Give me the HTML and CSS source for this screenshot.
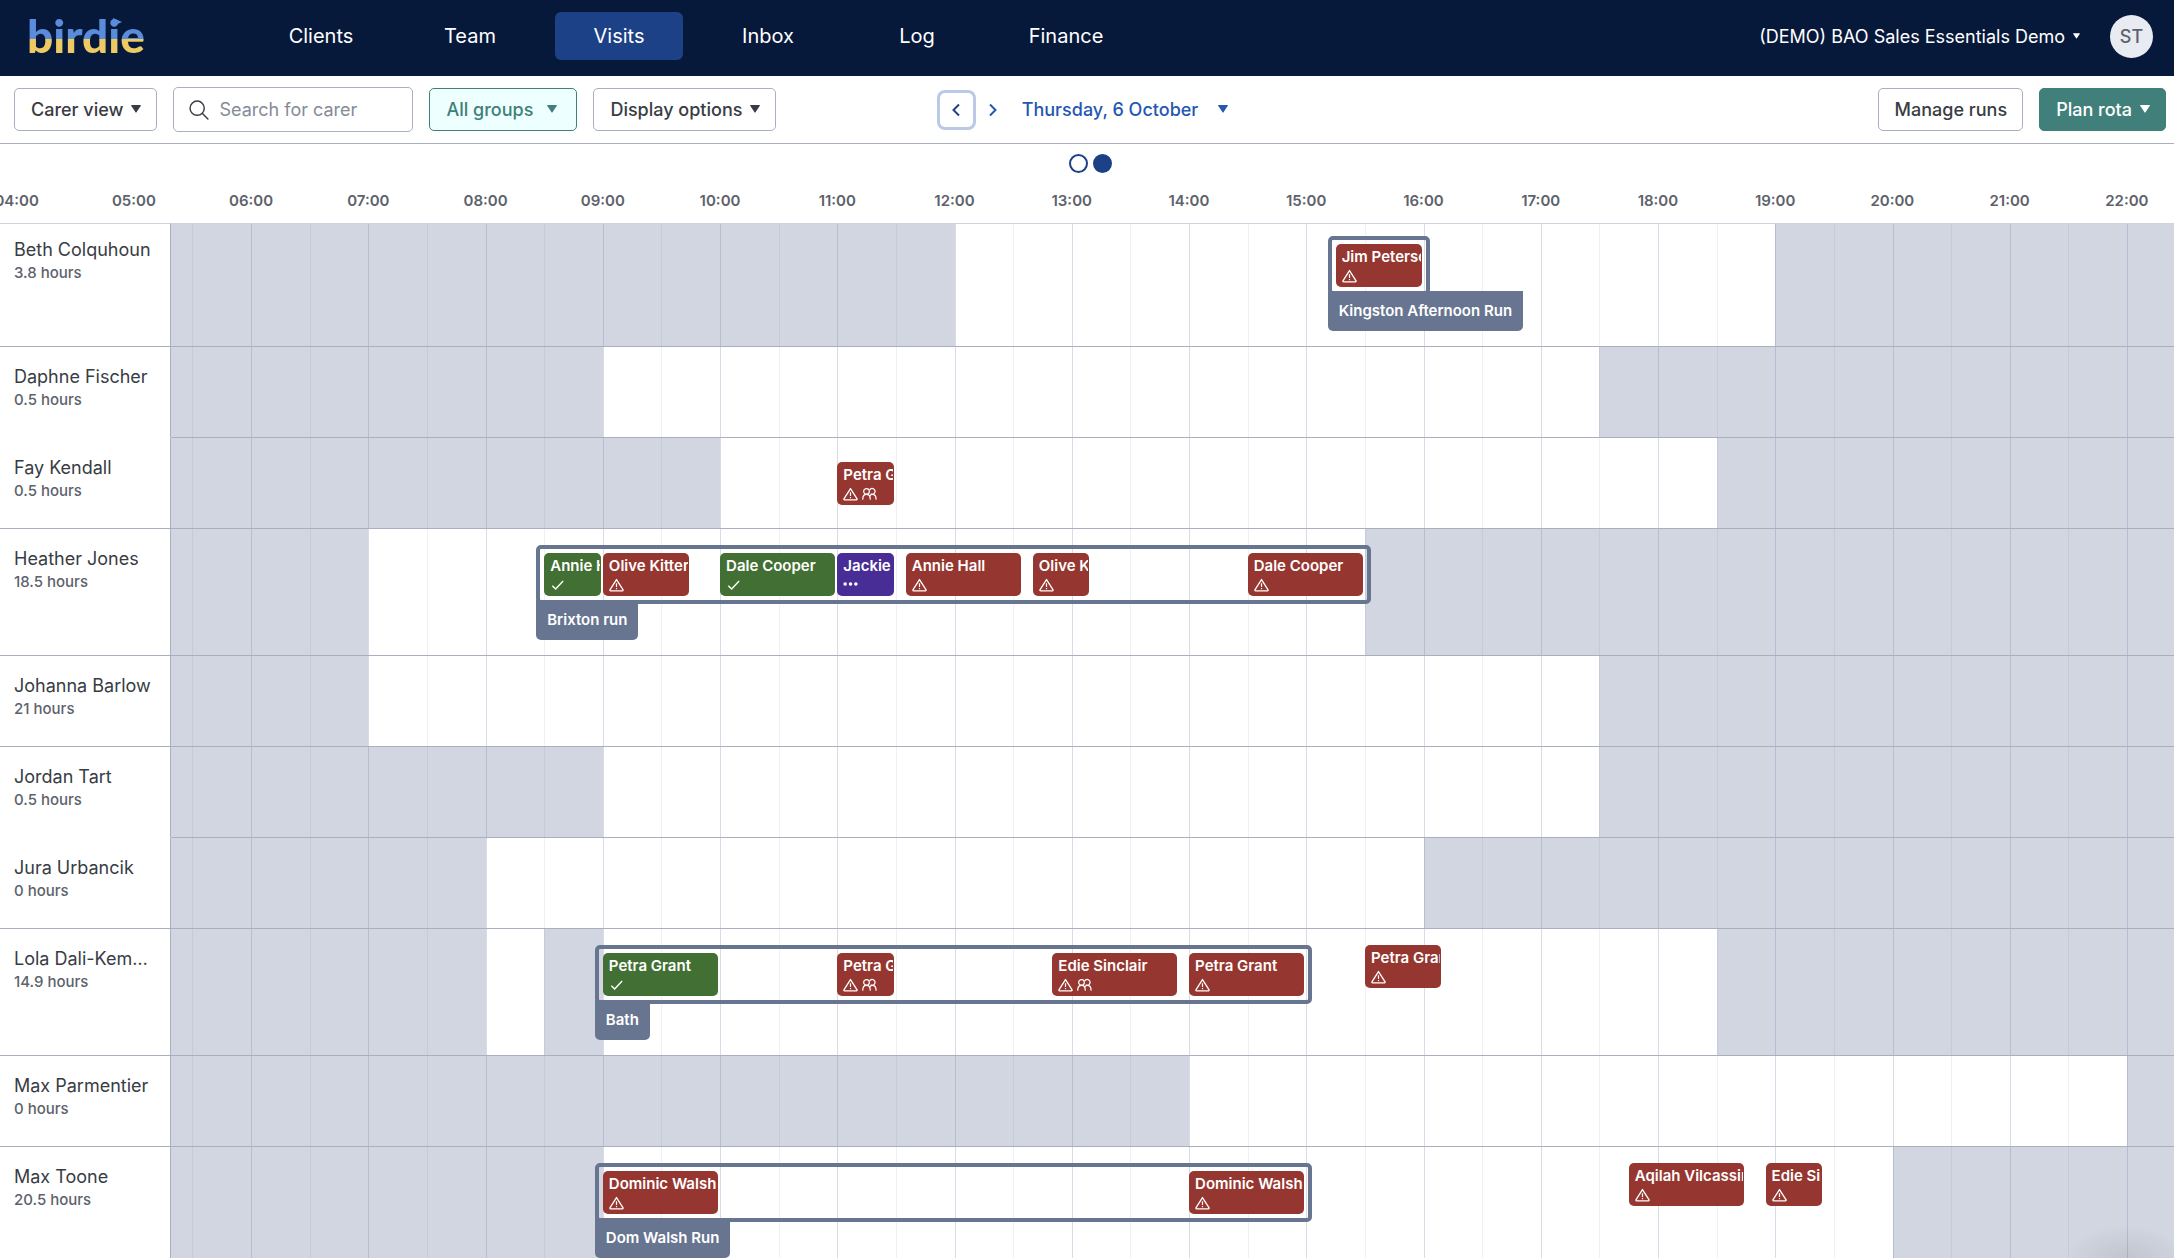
FILE: index.html
```html
<!DOCTYPE html>
<html lang="en">

<head>
  <meta charset="UTF-8">
  <meta name="viewport" content="width=device-width, initial-scale=1.0">
  <title>Visits - birdie</title>
  <link rel="stylesheet" href="styles.css">
</head>

<body>
  <!-- Shared icons -->
  <svg class="sprite" aria-hidden="true">
    <symbol id="caret" viewBox="0 0 10 8"><path d="M.6 0h8.8a.5.5 0 0 1 .4.8L5.5 7.3a.6.6 0 0 1-1 0L.2.8A.5.5 0 0 1 .6 0z" fill="currentColor"/></symbol>
    <symbol id="alert" viewBox="0 0 16 14"><path d="M8 1.2 15 12.2a.7.7 0 0 1-.6 1H1.6a.7.7 0 0 1-.6-1z" fill="none" stroke="currentColor" stroke-width="1.4" stroke-linejoin="round"/><path d="M8 5v4M8 10.2v1.3" stroke="currentColor" stroke-width="1.3"/></symbol>
    <symbol id="pair" viewBox="0 0 16 14"><g fill="none" stroke="currentColor" stroke-width="1.3" stroke-linecap="round"><circle cx="4.8" cy="4.2" r="3"/><path d="M.8 12.6c0-3 1.6-5.2 4-5.2s4 2.2 4 5.2"/><path d="M8.6 2.2a3 3 0 1 1 1.2 4.8M8.3 8.9c.7-1 1.5-1.6 2.7-1.6 2.4 0 4 2.2 4 5.2"/></g></symbol>
    <symbol id="tick" viewBox="0 0 16 14"><path d="M2.5 7.8 6 11.3 14 2.8" fill="none" stroke="currentColor" stroke-width="1.5"/></symbol>
    <symbol id="more" viewBox="0 0 16 14"><g fill="currentColor"><circle cx="2.3" cy="6" r="1.9"/><circle cx="8" cy="6" r="1.9"/><circle cx="13.7" cy="6" r="1.9"/></g></symbol>
  </svg>

  <!-- Main navigation -->
  <header class="topbar">
    <a class="logo" href="#">birdie</a>
    <nav class="tabs">
      <a href="#">Clients</a>
      <a href="#">Team</a>
      <a href="#" class="active" aria-current="page">Visits</a>
      <a href="#">Inbox</a>
      <a href="#">Log</a>
      <a href="#">Finance</a>
    </nav>
    <button type="button" class="agency">(DEMO) BAO Sales Essentials Demo <svg class="caret caret-small"><use href="#caret"/></svg></button>
    <button type="button" class="avatar" aria-label="Account ST">ST</button>
  </header>

  <!-- Filters and date -->
  <div class="toolbar">
    <div class="tools">
      <button type="button" class="btn">Carer view <svg class="caret"><use href="#caret"/></svg></button>
      <label class="search">
        <svg viewBox="0 0 22 22" aria-hidden="true"><g fill="none" stroke="currentColor" stroke-width="1.6" stroke-linecap="round"><circle cx="9" cy="9" r="7.8"/><path d="m14.8 14.8 6 6"/></g></svg>
        <input type="search" placeholder="Search for carer" aria-label="Search for carer">
      </label>
      <button type="button" class="btn btn-filter">All groups <svg class="caret"><use href="#caret"/></svg></button>
      <button type="button" class="btn">Display options <svg class="caret"><use href="#caret"/></svg></button>
    </div>
    <div class="date-nav">
      <button type="button" class="arrow focused" aria-label="Previous day"><svg viewBox="0 0 10 14"><path d="M8 1.5 2.5 7 8 12.5" fill="none" stroke="currentColor" stroke-width="2"/></svg></button>
      <button type="button" class="arrow" aria-label="Next day"><svg viewBox="0 0 10 14"><path d="M2 1.5 7.5 7 2 12.5" fill="none" stroke="currentColor" stroke-width="2"/></svg></button>
      <button type="button" class="date">Thursday, 6 October <svg class="caret"><use href="#caret"/></svg></button>
    </div>
    <div class="tools tools-right">
      <button type="button" class="btn">Manage runs</button>
      <button type="button" class="btn btn-primary">Plan rota <svg class="caret"><use href="#caret"/></svg></button>
    </div>
  </div>

  <!-- Time axis -->
  <div class="pager">
    <input type="radio" name="page" aria-label="Page 1">
    <input type="radio" name="page" aria-label="Page 2" checked>
  </div>
  <div class="hours">
    <span>04:00</span><span>05:00</span><span>06:00</span><span>07:00</span><span>08:00</span><span>09:00</span><span>10:00</span><span>11:00</span><span>12:00</span><span>13:00</span><span>14:00</span><span>15:00</span><span>16:00</span><span>17:00</span><span>18:00</span><span>19:00</span><span>20:00</span><span>21:00</span><span>22:00</span>
  </div>

  <!-- Rota. --from and --to are minutes since midnight -->
  <main class="rota">
    <section class="row row-first">
      <div class="carer"><h2>Beth Colquhoun</h2><p>3.8 hours</p></div>
      <div class="lane">
        <div class="off" style="--from: 319; --to: 720"></div>
        <div class="off" style="--from: 1140; --to: 1344"></div>
        <div class="run" style="--from: 915; --to: 960"></div>
        <div class="run-name" style="--from: 915">Kingston Afternoon Run</div>
        <div class="visit in-run late" style="--from: 915; --to: 960"><span>Jim Peterson</span><svg><use href="#alert"/></svg></div>
      </div>
    </section>

    <section class="row">
      <div class="carer"><h2>Daphne Fischer</h2><p>0.5 hours</p></div>
      <div class="lane">
        <div class="off" style="--from: 319; --to: 540"></div>
        <div class="off" style="--from: 1050; --to: 1344"></div>
      </div>
    </section>

    <section class="row row-joined">
      <div class="carer"><h2>Fay Kendall</h2><p>0.5 hours</p></div>
      <div class="lane">
        <div class="off" style="--from: 319; --to: 600"></div>
        <div class="off" style="--from: 1110; --to: 1344"></div>
        <div class="visit alone late" style="--from: 660; --to: 690"><span>Petra Grant</span><svg><use href="#alert"/></svg><svg><use href="#pair"/></svg></div>
      </div>
    </section>

    <section class="row">
      <div class="carer"><h2>Heather Jones</h2><p>18.5 hours</p></div>
      <div class="lane">
        <div class="off" style="--from: 319; --to: 420"></div>
        <div class="off" style="--from: 930; --to: 1344"></div>
        <div class="run" style="--from: 510; --to: 930"></div>
        <div class="run-name" style="--from: 510">Brixton run</div>
        <div class="visit in-run done" style="--from: 510; --to: 540"><span>Annie Hall</span><svg><use href="#tick"/></svg></div>
        <div class="visit in-run late" style="--from: 540; --to: 585"><span>Olive Kitteridge</span><svg><use href="#alert"/></svg></div>
        <div class="visit in-run done" style="--from: 600; --to: 660"><span>Dale Cooper</span><svg><use href="#tick"/></svg></div>
        <div class="visit in-run active" style="--from: 660; --to: 690"><span>Jackie</span><svg><use href="#more"/></svg></div>
        <div class="visit in-run late" style="--from: 695; --to: 755"><span>Annie Hall</span><svg><use href="#alert"/></svg></div>
        <div class="visit in-run late" style="--from: 760; --to: 790"><span>Olive Kitteridge</span><svg><use href="#alert"/></svg></div>
        <div class="visit in-run late" style="--from: 870; --to: 930"><span>Dale Cooper</span><svg><use href="#alert"/></svg></div>
      </div>
    </section>

    <section class="row">
      <div class="carer"><h2>Johanna Barlow</h2><p>21 hours</p></div>
      <div class="lane">
        <div class="off" style="--from: 319; --to: 420"></div>
        <div class="off" style="--from: 1050; --to: 1344"></div>
      </div>
    </section>

    <section class="row">
      <div class="carer"><h2>Jordan Tart</h2><p>0.5 hours</p></div>
      <div class="lane">
        <div class="off" style="--from: 319; --to: 540"></div>
        <div class="off" style="--from: 1050; --to: 1344"></div>
      </div>
    </section>

    <section class="row row-joined">
      <div class="carer"><h2>Jura Urbancik</h2><p>0 hours</p></div>
      <div class="lane">
        <div class="off" style="--from: 319; --to: 480"></div>
        <div class="off" style="--from: 960; --to: 1344"></div>
      </div>
    </section>

    <section class="row">
      <div class="carer"><h2>Lola Dali-Kem…</h2><p>14.9 hours</p></div>
      <div class="lane">
        <div class="off" style="--from: 319; --to: 480"></div>
        <div class="off" style="--from: 510; --to: 540"></div>
        <div class="off" style="--from: 1110; --to: 1344"></div>
        <div class="run" style="--from: 540; --to: 900"></div>
        <div class="run-name" style="--from: 540">Bath</div>
        <div class="visit in-run done" style="--from: 540; --to: 600"><span>Petra Grant</span><svg><use href="#tick"/></svg></div>
        <div class="visit in-run late" style="--from: 660; --to: 690"><span>Petra Grant</span><svg><use href="#alert"/></svg><svg><use href="#pair"/></svg></div>
        <div class="visit in-run late" style="--from: 770; --to: 835"><span>Edie Sinclair</span><svg><use href="#alert"/></svg><svg><use href="#pair"/></svg></div>
        <div class="visit in-run late" style="--from: 840; --to: 900"><span>Petra Grant</span><svg><use href="#alert"/></svg></div>
        <div class="visit late" style="--from: 930; --to: 970"><span>Petra Grant</span><svg><use href="#alert"/></svg></div>
      </div>
    </section>

    <section class="row">
      <div class="carer"><h2>Max Parmentier</h2><p>0 hours</p></div>
      <div class="lane">
        <div class="off" style="--from: 319; --to: 840"></div>
        <div class="off" style="--from: 1320; --to: 1344"></div>
      </div>
    </section>

    <section class="row">
      <div class="carer"><h2>Max Toone</h2><p>20.5 hours</p></div>
      <div class="lane">
        <div class="off" style="--from: 319; --to: 540"></div>
        <div class="off" style="--from: 1200; --to: 1344"></div>
        <div class="run" style="--from: 540; --to: 900"></div>
        <div class="run-name" style="--from: 540">Dom Walsh Run</div>
        <div class="visit in-run late" style="--from: 540; --to: 600"><span>Dominic Walsh</span><svg><use href="#alert"/></svg></div>
        <div class="visit in-run late" style="--from: 840; --to: 900"><span>Dominic Walsh</span><svg><use href="#alert"/></svg></div>
        <div class="visit late" style="--from: 1065; --to: 1125"><span>Aqilah Vilcassim</span><svg><use href="#alert"/></svg></div>
        <div class="visit late" style="--from: 1135; --to: 1165"><span>Edie Sinclair</span><svg><use href="#alert"/></svg></div>
      </div>
    </section>
  </main>
  <div class="help-shade"></div>
</body>

</html>
```
FILE: styles.css
```css
/* General */
:root {
  --side: 171px;
  /* the lanes show 1025 minutes, 05:19 to 22:24 */
  --minute: calc((100vw - var(--side)) / 1025);
  --navy: #07193b;
  --blue: #1c4186;
  --slate: #677590;
  --line: #a9afbf;
}

* {
  box-sizing: border-box;
}

body {
  margin: 0;
  height: 100vh;
  display: flex;
  flex-direction: column;
  overflow: hidden;
  background: #fff;
  color: #383c43;
  font-family: Inter, "Liberation Sans", sans-serif;
  font-size: 18px;
}

button,
input {
  font: inherit;
  color: inherit;
}

button {
  background: none;
  border: none;
  padding: 0;
  cursor: pointer;
  white-space: nowrap;
}

.sprite {
  display: none;
}

.caret {
  width: 10px;
  height: 8px;
  flex: none;
  margin-bottom: 1px;
}

.caret-small {
  width: 7px;
  height: 6px;
}

/* Top bar */
.topbar {
  flex: none;
  display: flex;
  align-items: center;
  height: 76px;
  padding: 0 21px 4px 27px;
  background: var(--navy);
  color: #fff;
}

.logo {
  position: relative;
  width: 230px;
  font-family: Lato, sans-serif;
  font-size: 46px;
  font-weight: 900;
  line-height: 48px;
  text-decoration: none;
  color: transparent;
  background: linear-gradient(#5b8cdc 27px, #edca62 27px);
  -webkit-background-clip: text;
  background-clip: text;
}

/* beak on the second i */
.logo::after {
  content: "";
  position: absolute;
  left: 86px;
  top: 6px;
  width: 9px;
  height: 8px;
  background: #5b8cdc;
  clip-path: polygon(0 0, 100% 50%, 0 100%);
}

.tabs {
  display: flex;
  gap: 21px;
  margin-right: auto;
}

.tabs a {
  width: 128px;
  line-height: 48px;
  border-radius: 6px;
  text-align: center;
  text-decoration: none;
  font-size: 20px;
  color: #fff;
}

.tabs .active {
  background: var(--blue);
}

.agency {
  display: flex;
  align-items: center;
  gap: 8px;
}

.avatar {
  width: 43px;
  height: 43px;
  margin-left: 30px;
  border-radius: 50%;
  background: #e8ebf2;
  color: #5d626b;
  font-weight: 500;
}

/* Toolbar */
.toolbar {
  flex: none;
  display: grid;
  grid-template-columns: 1fr auto 1fr;
  align-items: center;
  height: 68px;
  padding: 0 8px 0 14px;
  border-bottom: 1px solid var(--line);
}

.tools {
  display: flex;
  align-items: center;
  gap: 16px;
}

.tools-right {
  justify-content: flex-end;
}

.btn {
  display: flex;
  align-items: center;
  gap: 8px;
  height: 43px;
  padding: 0 15px 0 16px;
  border: 1px solid var(--line);
  border-radius: 5px;
  font-weight: 500;
}

.btn-filter {
  gap: 14px;
  padding-right: 19px;
  background: #edfffe;
  border-color: #41807a;
  color: #41807a;
}

.btn-primary {
  background: #41807a;
  border-color: #41807a;
  color: #fff;
}

.search {
  display: flex;
  align-items: center;
  gap: 10px;
  width: 240px;
  height: 45px;
  padding: 0 15px;
  border: 1px solid var(--line);
  border-radius: 5px;
}

.search svg {
  width: 20px;
  height: 20px;
  flex: none;
}

.search input {
  width: 100%;
  min-width: 0;
  padding: 0;
  border: none;
  outline: none;
  background: none;
}

.search input::placeholder {
  color: #858b98;
  opacity: 1;
}

.date-nav {
  display: flex;
  align-items: center;
  gap: 4px;
  color: #2457b3;
}

.arrow {
  display: flex;
  align-items: center;
  justify-content: center;
  width: 33px;
  height: 34px;
  border-radius: 5px;
}

.arrow svg {
  width: 10px;
  height: 14px;
}

.focused {
  color: var(--blue);
  box-shadow: 0 0 0 3px #b9c9e6;
}

.date {
  display: flex;
  align-items: center;
  gap: 20px;
  padding: 0 12px 0 8px;
  font-weight: 500;
}

/* Time axis */
.pager {
  flex: none;
  display: flex;
  justify-content: center;
  gap: 5px;
  padding: 10px 0 0 6px;
}

.pager input {
  appearance: none;
  width: 19px;
  height: 19px;
  margin: 0;
  border: 2px solid var(--blue);
  border-radius: 50%;
}

.pager input:checked {
  background: var(--blue);
}

.hours {
  flex: none;
  display: flex;
  margin-left: calc(var(--side) - 109 * var(--minute));
  padding: 18px 0 12px;
}

.hours span {
  flex: none;
  width: calc(60 * var(--minute));
  text-align: center;
  font-size: 15px;
  line-height: 20px;
  font-weight: 600;
  color: #5d626b;
}

/* Rota */
.rota {
  flex: 1;
  min-height: 0;
  overflow: hidden;
}

.row {
  display: grid;
  grid-template-columns: var(--side) minmax(0, 1fr);
}

.carer {
  padding: 18px 13px 0 14px;
  border-top: 1px solid var(--line);
  border-right: 1px solid var(--line);
}

.carer h2 {
  margin: 0;
  font-size: 18px;
  font-weight: 400;
  line-height: 24px;
  white-space: nowrap;
}

.carer p {
  margin: 0;
  font-size: 15px;
  font-weight: 500;
  line-height: 22px;
  color: #5d626b;
}

.row-joined .carer {
  border-top-color: transparent;
}

.row-first .carer {
  padding-top: 14px;
}

.lane {
  display: grid;
  grid-template-columns: repeat(1025, minmax(0, 1fr));
  grid-template-rows: 16px auto auto minmax(15px, 1fr);
  min-height: 91px;
  border-top: 1px solid var(--line);
  background:
    repeating-linear-gradient(to right, #d9dce8 4%, #d9dce8 calc(4% + 1px), transparent calc(4% + 1px), transparent calc(4% + 60 * var(--minute))),
    repeating-linear-gradient(to right, #eef0f7 4%, #eef0f7 calc(4% + 1px), transparent calc(4% + 1px), transparent calc(4% + 30 * var(--minute)));
}

.row-first .lane {
  grid-template-rows: 12px auto auto minmax(15px, 1fr);
}

.row-first .carer,
.row-first .lane {
  border-top-color: #cfd3de;
}

.off,
.run,
.visit {
  grid-column: calc(var(--from) - 318) / calc(var(--to) - 318);
}

.off {
  grid-row: 1 / -1;
  background: rgba(105, 118, 152, 0.3);
}

.run {
  grid-row: 2;
  height: 59px;
  margin: 0 -6px 0 -8px;
  border: 4px solid var(--slate);
  border-radius: 5px;
}

/* the name hangs from the bottom border of its run */
.run-name {
  grid-row: 3;
  grid-column: calc(var(--from) - 318) / -1;
  justify-self: start;
  margin: -4px 0 0 -8px;
  padding: 0 11px;
  border-radius: 0 0 5px 5px;
  background: var(--slate);
  color: #fff;
  font-size: 15px;
  font-weight: 600;
  line-height: 40px;
}

.visit {
  grid-row: 2;
  height: 43px;
  margin-right: 2px;
  padding: 3px 1px 0 6px;
  border-radius: 5px;
  color: #fff;
  font-size: 15px;
  font-weight: 600;
  line-height: 19px;
  overflow: hidden;
}

.in-run {
  margin-top: 8px;
}

.alone {
  grid-row: 1 / -1;
  align-self: center;
}

.visit span {
  display: block;
  overflow: hidden;
  white-space: nowrap;
}

.visit svg {
  float: left;
  width: 15px;
  height: 14px;
  margin: 3px 4px 0 0;
}

.late {
  background: #953730;
}

.done {
  background: #427034;
}

.visit.active {
  background: #492d96;
}

/* soft shade of the help button below the fold */
.help-shade {
  position: fixed;
  right: 0;
  bottom: 0;
  width: 120px;
  height: 36px;
  background: radial-gradient(60px 32px at 60% 100%, rgba(0, 0, 0, 0.08), transparent);
}
```
